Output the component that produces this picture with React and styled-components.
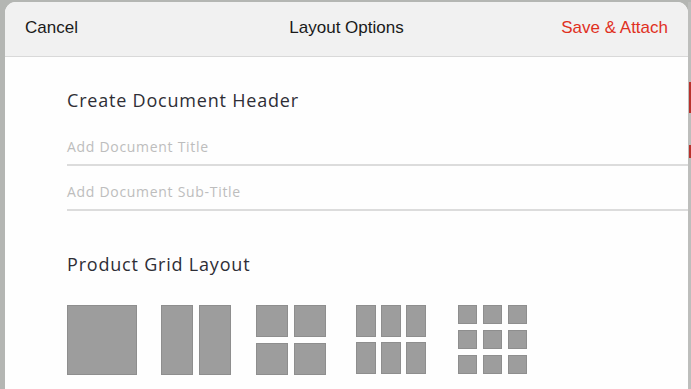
import React from 'react';
import styled, { createGlobalStyle } from 'styled-components';

const GlobalStyle = createGlobalStyle`
  html, body {
    margin: 0;
    padding: 0;
    height: 100%;
    overflow: hidden;
  }
  body {
    background: #b4b6b3;
    font-family: "Open Sans", "Liberation Sans", sans-serif;
  }
`;

const Backdrop = styled.div`
  display: flex;
  height: 389px;
  width: 691px;
  padding-top: 2px;
  box-sizing: border-box;
  overflow: hidden;
`;

const Gutter = styled.div`
  width: 5px;
  flex-shrink: 0;
  background: #b4b6b3;
`;

const RightGutter = styled.div`
  width: 3px;
  flex-shrink: 0;
  display: flex;
  flex-direction: column;
  background: #bdbebc;
`;

const PageMark = styled.div`
  margin-left: 1px;
  margin-top: ${p => p.$top}px;
  height: ${p => p.$h}px;
  background: ${p => p.$color};
`;

const Modal = styled.div`
  flex: 1;
  display: flex;
  flex-direction: column;
  background: #fefefe;
  border-radius: 11px 11px 0 0;
  overflow: hidden;
`;

const Header = styled.div`
  position: relative;
  display: flex;
  align-items: center;
  justify-content: space-between;
  height: 54px;
  padding: 0 20px 0 20px;
  background: #f1f1f1;
  border-bottom: 1px solid #d9d9d9;
  font-family: "Liberation Sans", Arial, sans-serif;
  font-size: 17px;
`;

const HeaderButton = styled.span`
  color: ${p => (p.$primary ? '#e0301e' : '#1a1a1a')};
  padding-bottom: 2px;
`;

const HeaderTitle = styled.span`
  position: absolute;
  left: 0;
  right: 0;
  text-align: center;
  color: #1a1a1a;
  padding-bottom: 2px;
  pointer-events: none;
`;

const Body = styled.div`
  display: flex;
  flex-direction: column;
  padding: 31px 0 0 62px;
`;

const SectionTitle = styled.h2`
  margin: 0;
  font-size: 18px;
  font-weight: 400;
  color: #2e2e36;
  letter-spacing: 0.8px;
  line-height: 24px;
`;

const Field = styled.div`
  display: flex;
  align-items: flex-end;
  height: ${p => p.$h}px;
  padding-bottom: 8px;
  box-sizing: border-box;
  border-bottom: 2px solid #dcdcdc;
  font-size: 14px;
  color: #bdbdbd;
  letter-spacing: 0.7px;
`;

const GridSection = styled.div`
  margin-top: 41px;
`;

const Layouts = styled.div`
  display: flex;
  margin-top: 29px;
`;

const LayoutOption = styled.div`
  display: grid;
  grid-template-columns: repeat(${p => p.$cols}, ${p => p.$w}px);
  grid-template-rows: repeat(${p => p.$rows}, ${p => p.$h}px);
  gap: ${p => p.$gap}px;
  margin-left: ${p => p.$ml}px;
`;

const Tile = styled.div`
  background: #9d9d9d;
  border: 1px solid #8e8e8e;
  box-sizing: border-box;
`;

const layouts = [
  { cols: 1, rows: 1, w: 70, h: 70, gap: 0, ml: 0 },
  { cols: 2, rows: 1, w: 32, h: 70, gap: 6, ml: 24 },
  { cols: 2, rows: 2, w: 32, h: 32, gap: 6, ml: 25 },
  { cols: 3, rows: 2, w: 20, h: 32, gap: 5, ml: 30 },
  { cols: 3, rows: 3, w: 19, h: 19, gap: 6, ml: 32 },
];

export default function App() {
  return (
    <>
      <GlobalStyle />
      <Backdrop>
        <Gutter />
        <Modal>
          <Header>
            <HeaderButton>Cancel</HeaderButton>
            <HeaderTitle>Layout Options</HeaderTitle>
            <HeaderButton $primary>Save &amp; Attach</HeaderButton>
          </Header>
          <Body>
            <SectionTitle>Create Document Header</SectionTitle>
            <Field $h={54}>Add Document Title</Field>
            <Field $h={45}>Add Document Sub-Title</Field>
            <GridSection>
              <SectionTitle>Product Grid Layout</SectionTitle>
              <Layouts>
                {layouts.map((l, i) => (
                  <LayoutOption
                    key={i}
                    $cols={l.cols}
                    $rows={l.rows}
                    $w={l.w}
                    $h={l.h}
                    $gap={l.gap}
                    $ml={l.ml}
                  >
                    {Array.from({ length: l.cols * l.rows }).map((_, j) => (
                      <Tile key={j} />
                    ))}
                  </LayoutOption>
                ))}
              </Layouts>
            </GridSection>
          </Body>
        </Modal>
        <RightGutter>
          <PageMark $top={80} $h={31} $color="#b8322c" />
          <PageMark $top={32} $h={13} $color="#b8322c" />
        </RightGutter>
      </Backdrop>
    </>
  );
}
